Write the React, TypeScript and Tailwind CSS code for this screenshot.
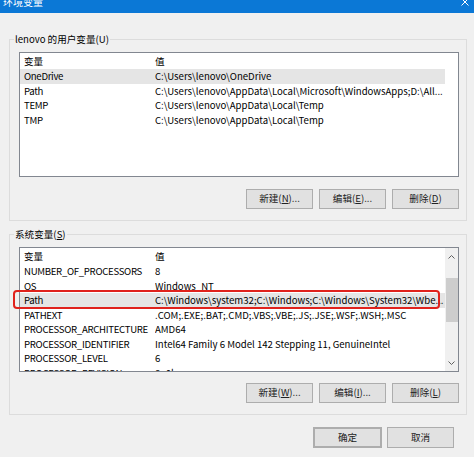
import type { ReactNode } from 'react';

type Row = { name: string; value: string; selected?: boolean };

const userRows: Row[] = [
  { name: 'OneDrive', value: 'C:\\Users\\lenovo\\OneDrive', selected: true },
  { name: 'Path', value: 'C:\\Users\\lenovo\\AppData\\Local\\Microsoft\\WindowsApps;D:\\All...' },
  { name: 'TEMP', value: 'C:\\Users\\lenovo\\AppData\\Local\\Temp' },
  { name: 'TMP', value: 'C:\\Users\\lenovo\\AppData\\Local\\Temp' },
];

const systemRows: Row[] = [
  { name: 'NUMBER_OF_PROCESSORS', value: '8' },
  { name: 'OS', value: 'Windows_NT' },
  { name: 'Path', value: 'C:\\Windows\\system32;C:\\Windows;C:\\Windows\\System32\\Wbe...', selected: true },
  { name: 'PATHEXT', value: '.COM;.EXE;.BAT;.CMD;.VBS;.VBE;.JS;.JSE;.WSF;.WSH;.MSC' },
  { name: 'PROCESSOR_ARCHITECTURE', value: 'AMD64' },
  { name: 'PROCESSOR_IDENTIFIER', value: 'Intel64 Family 6 Model 142 Stepping 11, GenuineIntel' },
  { name: 'PROCESSOR_LEVEL', value: '6' },
  { name: 'PROCESSOR_REVISION', value: '8e0b' },
];

function Chevron({ up }: { up?: boolean }) {
  return (
    <svg width="7" height="4" viewBox="0 0 7 4" className={up ? '' : 'rotate-180'}>
      <path d="M0.5 3.5 L3.5 0.5 L6.5 3.5" fill="none" stroke="#606060" strokeWidth="1" />
    </svg>
  );
}

function VarList({ rows, scroll }: { rows: Row[]; scroll?: boolean }) {
  return (
    <div className="h-[125px] border border-[#828790] bg-white flex overflow-hidden">
      <div className="w-[425px] flex flex-col">
        <div className="h-[16px] flex items-center shrink-0">
          <div className="w-[135px] pl-[4px]">变量</div>
          <div className="flex-1">值</div>
        </div>
        {rows.map((r) => (
          <div
            key={r.name}
            className={`h-[14.5px] flex items-center shrink-0 whitespace-nowrap ${r.selected ? 'bg-[#e5e5e5]' : ''}`}
          >
            <div className="w-[135px] pl-[4px] overflow-hidden tracking-[-0.3px]">{r.name}</div>
            <div className="flex-1 overflow-hidden">{r.value}</div>
          </div>
        ))}
      </div>
      {scroll && (
        <div className="w-[13px] ml-auto bg-[#f0f0f0] flex flex-col items-center">
          <div className="h-[17px] flex items-center justify-center">
            <Chevron up />
          </div>
          <div className="flex-1 w-full flex flex-col items-center">
            <div className="mt-[13px] h-[44px] w-[12px] bg-[#cdcdcd]" />
          </div>
          <div className="h-[17px] flex items-center justify-center">
            <Chevron />
          </div>
        </div>
      )}
    </div>
  );
}

function Btn({ children, className = '' }: { children: ReactNode; className?: string }) {
  return (
    <button
      className={`h-[20px] w-[67px] bg-[#e1e1e1] border border-[#adadad] text-[9.6px] leading-none text-[#222] flex items-center justify-center ${className}`}
    >
      {children}
    </button>
  );
}

function Group({ label, children }: { label: ReactNode; children: ReactNode }) {
  return (
    <fieldset className="border border-[#dcdcdc] pl-[9px] pr-[7px] pt-[7px] pb-[11px]">
      <legend className="-ml-[5px] px-px leading-[12px]">{label}</legend>
      {children}
    </fieldset>
  );
}

export default function App() {
  return (
    <div className="w-[474px] h-[457px] bg-[#f0f0f0] overflow-hidden relative text-[9.6px] text-black font-['Noto_Sans_CJK_SC',sans-serif]">
      {/* title bar */}
      <div className="h-[13px] bg-[#0b78d6] flex items-start justify-between overflow-hidden pl-[3px] pr-[5px]">
        <span className="text-white text-[10px] leading-[12px] -mt-[4px]">环境变量</span>
        <svg width="8" height="8" viewBox="0 0 8 8" className="-mt-[2px]">
          <path d="M0.5 0.5 L7.5 7.5 M7.5 0.5 L0.5 7.5" stroke="#fff" strokeWidth="1" />
        </svg>
      </div>

      <div className="pl-[9px] pr-[7px]">
        <div className="mt-[20px]">
          <Group label="lenovo 的用户变量(U)">
            <VarList rows={userRows} />
            <div className="mt-[12px] flex justify-end gap-[6px]">
              <Btn>新建(<span className="underline">N</span>)...</Btn>
              <Btn>编辑(<span className="underline">E</span>)...</Btn>
              <Btn>删除(<span className="underline">D</span>)</Btn>
            </div>
          </Group>
        </div>

        <div className="mt-[7px]">
          <Group label={<>系统变量(<span className="underline">S</span>)</>}>
            <VarList rows={systemRows} scroll />
            <div className="mt-[11px] flex justify-end gap-[6px]">
              <Btn>新建(<span className="underline">W</span>)...</Btn>
              <Btn className="border-[#6e6e6e]">编辑(<span className="underline">I</span>)...</Btn>
              <Btn>删除(<span className="underline">L</span>)</Btn>
            </div>
          </Group>
        </div>
      </div>

      <div className="mt-[12px] flex justify-end gap-[5px] pr-[20px]">
        <Btn className="h-[21px] w-[69px] border-[#2b7fd6] border-2">确定</Btn>
        <Btn className="h-[21px]">取消</Btn>
      </div>

      {/* red annotation around the Path row */}
      <div className="absolute left-[13px] top-[290px] w-[427px] h-[19px] border-2 border-[#e0221c] rounded-[4px] pointer-events-none" />
    </div>
  );
}
